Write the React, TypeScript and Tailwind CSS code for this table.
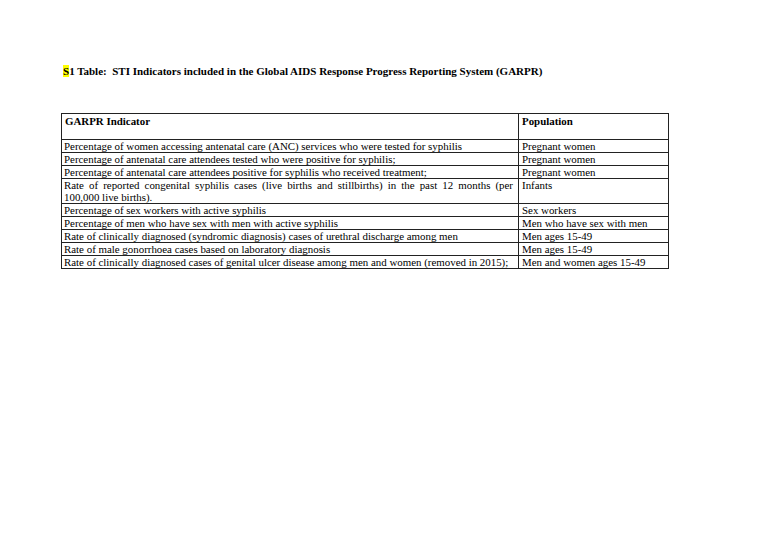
const ROWS: [React.ReactNode, string][] = [
  ["Percentage of women accessing antenatal care (ANC) services who were tested for syphilis", "Pregnant women"],
  ["Percentage of antenatal care attendees tested who were positive for syphilis;", "Pregnant women"],
  ["Percentage of antenatal care attendees positive for syphilis who received treatment;", "Pregnant women"],
  [
    <>
      <span className="block text-justify [text-align-last:justify] pr-[3px]">
        Rate of reported congenital syphilis cases (live births and stillbirths) in the past 12 months (per
      </span>
      <span className="block">100,000 live births).</span>
    </>,
    "Infants",
  ],
  ["Percentage of sex workers with active syphilis", "Sex workers"],
  ["Percentage of men who have sex with men with active syphilis", "Men who have sex with men"],
  ["Rate of clinically diagnosed (syndromic diagnosis) cases of urethral discharge among men", "Men ages 15-49"],
  ["Rate of male gonorrhoea cases based on laboratory diagnosis", "Men ages 15-49"],
  ["Rate of clinically diagnosed cases of genital ulcer disease among men and women (removed in 2015);", "Men and women ages 15-49"],
];

export default function App() {
  return (
    <div className="w-[768px] h-[543px] bg-white text-black font-['Liberation_Serif',serif] overflow-hidden">
      <div className="pt-[65px] pl-[63px]">
        <p className="text-[11px] font-bold leading-[13px] whitespace-nowrap">
          <span className="bg-[#ffff00]">S</span>1 Table:&nbsp; STI Indicators included in the Global AIDS Response Progress Reporting System (GARPR)
        </p>
      </div>
      <table className="ml-[61px] mt-[35px] w-[608px] border-collapse text-[10.9px] leading-[12px]">
        <colgroup>
          <col className="w-[457px]" />
          <col />
        </colgroup>
        <thead>
          <tr className="h-[26px]">
            <th className="border border-[#222] align-top text-left font-bold px-[3px] pt-[1px]">GARPR Indicator</th>
            <th className="border border-[#222] align-top text-left font-bold px-[3px] pt-[1px]">Population</th>
          </tr>
        </thead>
        <tbody>
          {ROWS.map(([indicator, population], i) => (
            <tr key={i}>
              <td className="border border-[#222] align-top px-[2px] text-justify">{indicator}</td>
              <td className="border border-[#222] align-top px-[3px] whitespace-nowrap">{population}</td>
            </tr>
          ))}
        </tbody>
      </table>
    </div>
  );
}
